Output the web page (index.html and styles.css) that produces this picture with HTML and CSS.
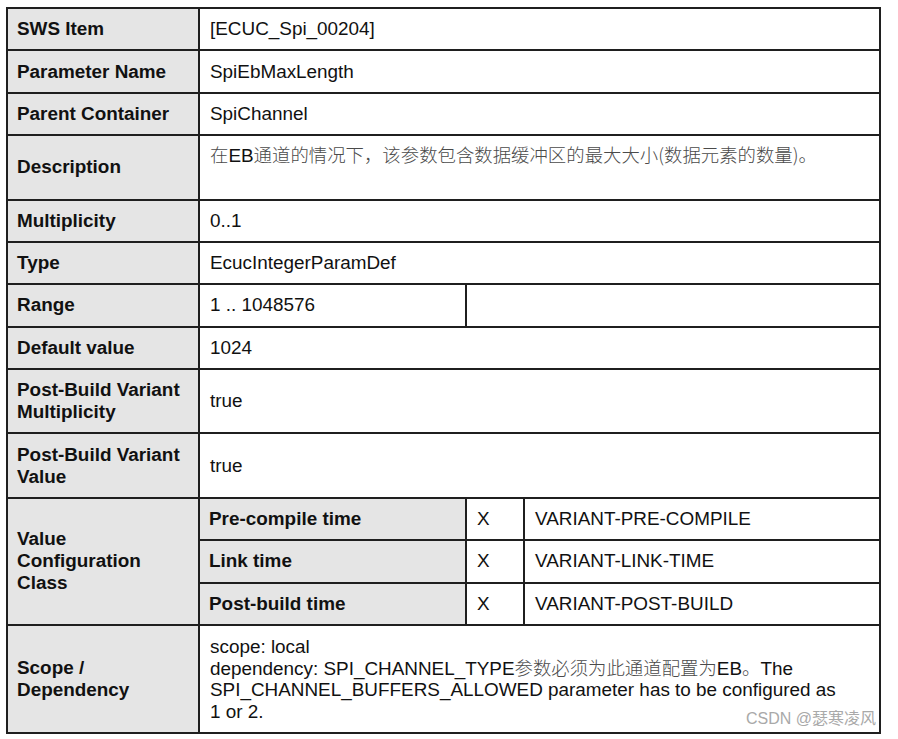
FILE: index.html
```html
<!DOCTYPE html>
<html lang="zh">
<head>
<meta charset="utf-8">
<title>SpiEbMaxLength</title>
<link rel="stylesheet" href="styles.css">
</head>
<body>
<table class="spec">
  <colgroup>
    <col class="c1"><col class="c2"><col class="c3"><col class="c4">
  </colgroup>
  <tr><th>SWS Item</th><td colspan="3">[ECUC_Spi_00204]</td></tr>
  <tr><th>Parameter Name</th><td colspan="3">SpiEbMaxLength</td></tr>
  <tr><th>Parent Container</th><td colspan="3">SpiChannel</td></tr>
  <tr class="two"><th>Description</th><td colspan="3" class="top"><span class="cjk">在</span>EB<span class="cjk">通道的情况下，该参数包含数据缓冲区的最大大小(数据元素的数量)。</span></td></tr>
  <tr><th>Multiplicity</th><td colspan="3">0..1</td></tr>
  <tr><th>Type</th><td colspan="3">EcucIntegerParamDef</td></tr>
  <tr><th>Range</th><td>1 .. 1048576</td><td colspan="2"></td></tr>
  <tr><th>Default value</th><td colspan="3">1024</td></tr>
  <tr><th>Post-Build Variant Multiplicity</th><td colspan="3">true</td></tr>
  <tr><th>Post-Build Variant Value</th><td colspan="3">true</td></tr>
  <tr><th rowspan="3">Value Configuration Class</th><th>Pre-compile time</th><td>X</td><td>VARIANT-PRE-COMPILE</td></tr>
  <tr><th>Link time</th><td>X</td><td>VARIANT-LINK-TIME</td></tr>
  <tr><th>Post-build time</th><td>X</td><td>VARIANT-POST-BUILD</td></tr>
  <tr><th>Scope / Dependency</th><td colspan="3" class="top scope">scope: local<br>dependency: SPI_CHANNEL_TYPE<span class="cjk">参数必须为此通道配置为</span>EB<span class="cjk">。</span>The<br>SPI_CHANNEL_BUFFERS_ALLOWED parameter has to be configured as<br>1 or 2.</td></tr>
</table>
<div class="watermark">CSDN @瑟寒凌风</div>
</body>
</html>
```
FILE: styles.css
```css
html, body {
  margin: 0;
  padding: 0;
  background: #ffffff;
}
body {
  position: relative;
  width: 898px;
  height: 739px;
  overflow: hidden;
  font-family: "Liberation Sans", Arial, "Noto Sans CJK SC", sans-serif;
  color: #111;
}
.spec {
  margin: 7px 0 0 6px;
  border-collapse: collapse;
  table-layout: fixed;
  width: 873px;
  font-size: 18.9px;
  line-height: 22px;
}
.c1 { width: 192px; }
.c2 { width: 267px; }
.c3 { width: 58px; }
.c4 { width: 356px; }
.spec th, .spec td {
  border: 2px solid #1f1f1f;
  padding: 9.2px 10px 9.2px 9px;
  text-align: left;
  vertical-align: middle;
  font-weight: normal;
}
.spec td {
  padding-left: 10px;
}
.spec th {
  background: #e5e5e5;
  font-weight: bold;
}
.spec td.top {
  vertical-align: top;
}
.two td.top {
  height: 44px;
}
.spec td.scope {
  line-height: 21.7px;
  padding-top: 10px;
}
.cjk {
  font-family: "Noto Sans CJK SC", sans-serif;
  font-weight: 300;
  color: #4a4a4a;
  font-size: 18.4px;
  line-height: 1;
}
.watermark {
  position: absolute;
  right: 22px;
  top: 709px;
  font-size: 16px;
  line-height: 20px;
  color: #a9a9a9;
  font-family: "Liberation Sans", Arial, "Noto Sans CJK SC", sans-serif;
}
```
